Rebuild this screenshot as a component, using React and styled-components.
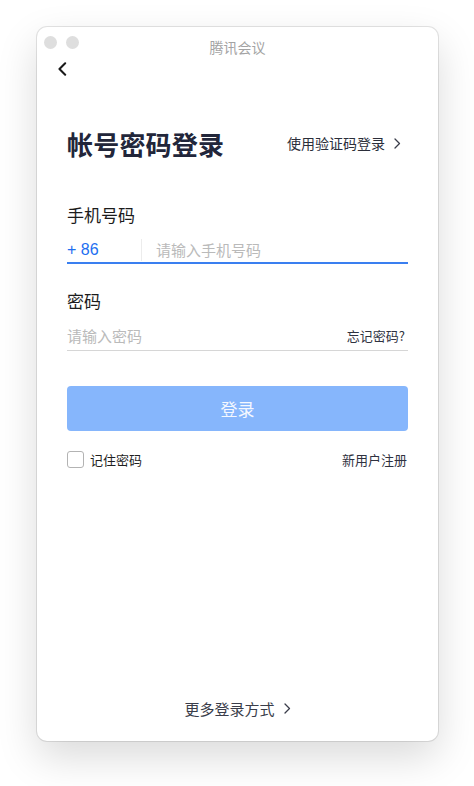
import React from 'react';
import styled, { createGlobalStyle } from 'styled-components';

const GlobalStyle = createGlobalStyle`
  body {
    margin: 0;
    background: #ffffff;
    font-family: "Noto Sans CJK SC", "Noto Sans", sans-serif;
  }
  * { box-sizing: border-box; }
`

const Page = styled.div`
  width: 474px;
  height: 786px;
  padding: 27px 0 0 37px;
`

const Window = styled.div`
  width: 401px;
  height: 714px;
  background: #ffffff;
  border-radius: 10px;
  box-shadow: 0 16px 40px rgba(0, 0, 0, 0.15), 0 0 0 1px rgba(0, 0, 0, 0.1);
  display: flex;
  flex-direction: column;
`

const TitleBar = styled.div`
  height: 30px;
  display: grid;
  grid-template-columns: 1fr auto 1fr;
  align-items: start;
  padding: 0 7px;
`

const Lights = styled.div`
  display: flex;
  gap: 9px;
  margin-top: 9px;
`

const Light = styled.span`
  width: 13px;
  height: 13px;
  border-radius: 50%;
  background: #dedede;
`

const Title = styled.div`
  margin-top: 11px;
  font-size: 14px;
  line-height: 18px;
  color: #a3a3a3;
`

const BackButton = styled.button`
  border: 0;
  background: none;
  padding: 0;
  margin: 5px 0 0 20px;
  width: 12px;
  height: 14px;
  display: flex;
`

const Content = styled.div`
  flex: 1;
  display: flex;
  flex-direction: column;
  padding: 0 30px 22px 30px;
`

const HeadRow = styled.div`
  margin-top: 49px;
  height: 36px;
  display: flex;
  align-items: center;
  justify-content: space-between;
`

const Heading = styled.h1`
  margin: 0;
  font-size: 26px;
  font-weight: 700;
  color: #22263a;
  letter-spacing: 0.2px;
`

const Link = styled.a`
  display: flex;
  align-items: center;
  gap: ${p => p.gap || 8}px;
  font-size: ${p => p.size || 13}px;
  color: ${p => p.color || '#2f3240'};
  text-decoration: none;
  margin-right: ${p => p.right || 0}px;
`

const Label = styled.div`
  margin-top: ${p => p.top}px;
  font-size: 17px;
  line-height: 24px;
  color: #1c1c1c;
`

const Field = styled.div`
  margin-top: ${p => p.top}px;
  height: ${p => p.h}px;
  display: flex;
  align-items: center;
  border-bottom: ${p => p.active ? '2px solid #3a7ff0' : '1px solid #d6d6d6'};
`

const Code = styled.div`
  width: 74px;
  font-family: "Liberation Sans", Arial, sans-serif;
  font-size: 16px;
  color: #1e6ff1;
`

const Divider = styled.span`
  width: 1px;
  height: 22px;
  background: #ececec;
  margin-right: 14px;
`

const Input = styled.input`
  flex: 1;
  min-width: 0;
  border: 0;
  outline: none;
  padding: 0;
  font-family: inherit;
  font-size: 15px;
  color: #222;
  background: transparent;
  &::placeholder { color: #bababa; }
`

const SubmitButton = styled.button`
  margin-top: 35px;
  height: 45px;
  border: 0;
  border-radius: 4px;
  background: #86b6fc;
  color: #f4f8ff;
  font-family: inherit;
  font-size: 17px;
`

const OptionRow = styled.div`
  margin-top: 16px;
  height: 24px;
  display: flex;
  align-items: center;
  justify-content: space-between;
`

const Remember = styled.label`
  display: flex;
  align-items: center;
  gap: 6px;
  font-size: 13px;
  color: #1f1f1f;
`

const Box = styled.span`
  width: 17px;
  height: 17px;
  border: 1px solid #b3b3b3;
  border-radius: 3px;
  background: #fff;
`

const Footer = styled.div`
  margin-top: auto;
  height: 22px;
  display: flex;
  justify-content: center;
`

const Chevron = ({ dir = 'right', w = 7, h = 11, color = '#3a3d4a', sw = 1.3 }) => (
  <svg width={w} height={h} viewBox="0 0 7 11" fill="none">
    <path
      d={dir === 'right' ? 'M1 1l4.5 4.5L1 10' : 'M6 1L1.5 5.5 6 10'}
      stroke={color}
      strokeWidth={sw}
      strokeLinecap="round"
      strokeLinejoin="round"
    />
  </svg>
)

export default function App() {
  return (
    <Page>
      <GlobalStyle />
      <Window>
        <TitleBar>
          <Lights>
            <Light />
            <Light />
          </Lights>
          <Title>腾讯会议</Title>
        </TitleBar>
        <BackButton>
          <Chevron dir="left" w={10} h={14} color="#1a1a1a" sw={1.6} />
        </BackButton>
        <Content>
          <HeadRow>
            <Heading>帐号密码登录</Heading>
            <Link size={14} gap={9} right={7} color="#2b2e3a">
              使用验证码登录 <Chevron />
            </Link>
          </HeadRow>

          <Label top={42}>手机号码</Label>
          <Field top={10} h={27} active>
            <Code>+ 86</Code>
            <Divider />
            <Input placeholder="请输入手机号码" />
          </Field>

          <Label top={25}>密码</Label>
          <Field top={8} h={30}>
            <Input type="password" placeholder="请输入密码" />
            <Link right={3}>忘记密码?</Link>
          </Field>

          <SubmitButton>登录</SubmitButton>

          <OptionRow>
            <Remember>
              <Box />
              记住密码
            </Remember>
            <Link right={1}>新用户注册</Link>
          </OptionRow>

          <Footer>
            <Link size={15} gap={9} color="#3a3d4a">
              更多登录方式 <Chevron />
            </Link>
          </Footer>
        </Content>
      </Window>
    </Page>
  );
}
